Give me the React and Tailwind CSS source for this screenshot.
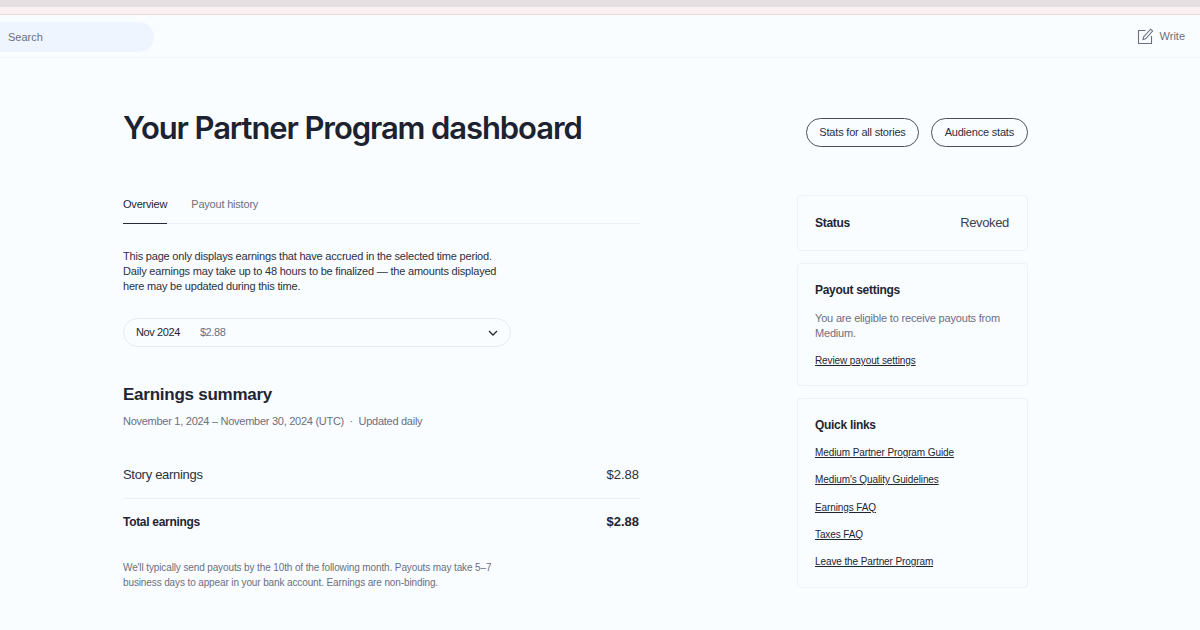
const QUICK_LINKS = [
  'Medium Partner Program Guide',
  "Medium's Quality Guidelines",
  'Earnings FAQ',
  'Taxes FAQ',
  'Leave the Partner Program',
]

function WriteIcon() {
  return (
    <svg width="17" height="17" viewBox="0 0 17 17" fill="none" stroke="#6b6f80" strokeWidth="1.1">
      <path d="M8.5 2.5H1.5V15.5H14.5V8" />
      <path d="M6 11.5L6.6 9L13.6 1.2L15.6 3L8.6 10.8Z" />
    </svg>
  )
}

function Chevron() {
  return (
    <svg width="10" height="6" viewBox="0 0 10 6" fill="none" stroke="#242a38" strokeWidth="1.3">
      <path d="M1 1L5 5L9 1" />
    </svg>
  )
}

export default function App() {
  return (
    <div className="w-[1200px] h-[630px] overflow-hidden bg-[#f9fdff] text-[#1f2533] font-['Liberation_Sans',sans-serif]">
      {/* browser strip */}
      <div className="h-[15px] bg-[#fbf0f2] border-b border-[#e8d9d9]">
        <div className="h-[7px] bg-[#e6dfe1]" />
      </div>

      {/* top bar */}
      <div className="h-[43px] flex items-center justify-between border-b border-[#f1f5f8]">
        <div className="w-[154px] h-[30px] mt-[1px] pt-[2px] bg-[#eff5fe] rounded-r-full flex items-center pl-2 text-[11px] text-[#6b6f80]">
          Search
        </div>
        <div className="flex items-center gap-[6px] mt-[1px] pr-[15px] text-[11px] text-[#6b6f80]">
          <WriteIcon />
          <span>Write</span>
        </div>
      </div>

      <div className="flex pl-[123px] pr-[172px] justify-between">
        {/* main column */}
        <div className="w-[517px]">
          <h1 className="mt-[50px] font-['Inter',sans-serif] text-[31px] leading-[40px] font-semibold tracking-[-1.1px] text-[#1d2230] whitespace-nowrap">
            Your Partner Program dashboard
          </h1>

          <div className="mt-[39px] h-[37px] flex gap-6 border-b border-[#eef1f4] text-[11px] tracking-[-0.2px]">
            <div className="h-[37px] pt-[9px] border-b border-[#242a38]">Overview</div>
            <div className="pt-[9px] text-[#6b6f80]">Payout history</div>
          </div>

          <p className="mt-[25px] text-[11px] leading-[15px] tracking-[-0.2px] text-[#2b3040] whitespace-nowrap">
            This page only displays earnings that have accrued in the selected time period.
            <br />
            Daily earnings may take up to 48 hours to be finalized — the amounts displayed
            <br />
            here may be updated during this time.
          </p>

          <div className="mt-6 w-[388px] h-[29px] rounded-full border border-[#e6ebf0] flex items-center justify-between pl-3 pr-[12px] text-[11px] tracking-[-0.4px]">
            <div className="flex gap-5">
              <span>Nov 2024</span>
              <span className="text-[#6b6f80]">$2.88</span>
            </div>
            <Chevron />
          </div>

          <h2 className="mt-[36px] text-[17px] leading-6 font-bold tracking-[-0.25px]">Earnings summary</h2>
          <div className="mt-[6px] text-[11px] leading-4 tracking-[-0.27px] text-[#6b6f80] whitespace-nowrap">
            November 1, 2024 – November 30, 2024 (UTC) &nbsp;·&nbsp; Updated daily
          </div>

          <div className="mt-[22px] h-[48px] flex items-center justify-between border-b border-[#eef1f4] text-[13px] tracking-[-0.3px] text-[#2b3040]">
            <span>Story earnings</span>
            <span className="pr-[1px] tracking-normal">$2.88</span>
          </div>
          <div className="h-[46px] flex items-center justify-between text-xs font-bold tracking-[-0.3px]">
            <span>Total earnings</span>
            <span className="pr-[1px] text-[13px] tracking-normal">$2.88</span>
          </div>

          <p className="mt-[15px] text-[10px] leading-[15px] tracking-[-0.12px] text-[#6b6f80] whitespace-nowrap">
            We'll typically send payouts by the 10th of the following month. Payouts may take 5–7
            <br />
            business days to appear in your bank account. Earnings are non-binding.
          </p>
        </div>

        {/* side column */}
        <div className="w-[231px]">
          <div className="mt-[60px] flex justify-end gap-3 text-[11px] tracking-[-0.2px] text-[#2b3040] whitespace-nowrap">
            <div className="h-[29px] px-3 flex items-center rounded-full border border-[#4b5060]">Stats for all stories</div>
            <div className="h-[29px] px-[13px] flex items-center rounded-full border border-[#4b5060]">Audience stats</div>
          </div>

          <div className="mt-[48px] h-[56px] pl-[17px] pr-[18px] flex items-center justify-between rounded border border-[#eef2f6]">
            <span className="text-xs font-bold tracking-[-0.3px]">Status</span>
            <span className="text-[13px] tracking-[-0.35px] text-[#3b4050]">Revoked</span>
          </div>

          <div className="mt-3 h-[123px] pl-[17px] pr-[18px] pt-[18px] rounded border border-[#eef2f6]">
            <div className="text-xs leading-4 font-bold tracking-[-0.3px]">Payout settings</div>
            <p className="mt-[13px] text-[11px] leading-[15px] tracking-[-0.18px] text-[#6b6f80]">
              You are eligible to receive payouts from Medium.
            </p>
            <a className="block mt-[12px] text-[10px] leading-4 tracking-[-0.1px] underline">Review payout settings</a>
          </div>

          <div className="mt-3 h-[190px] pl-[17px] pr-[18px] pt-[18px] rounded border border-[#eef2f6]">
            <div className="text-xs leading-4 font-bold tracking-[-0.3px]">Quick links</div>
            <div className="mt-[12px] flex flex-col gap-[11.3px]">
              {QUICK_LINKS.map(link => (
                <a key={link} className="text-[10px] leading-4 tracking-[-0.1px] underline">{link}</a>
              ))}
            </div>
          </div>
        </div>
      </div>
    </div>
  )
}
